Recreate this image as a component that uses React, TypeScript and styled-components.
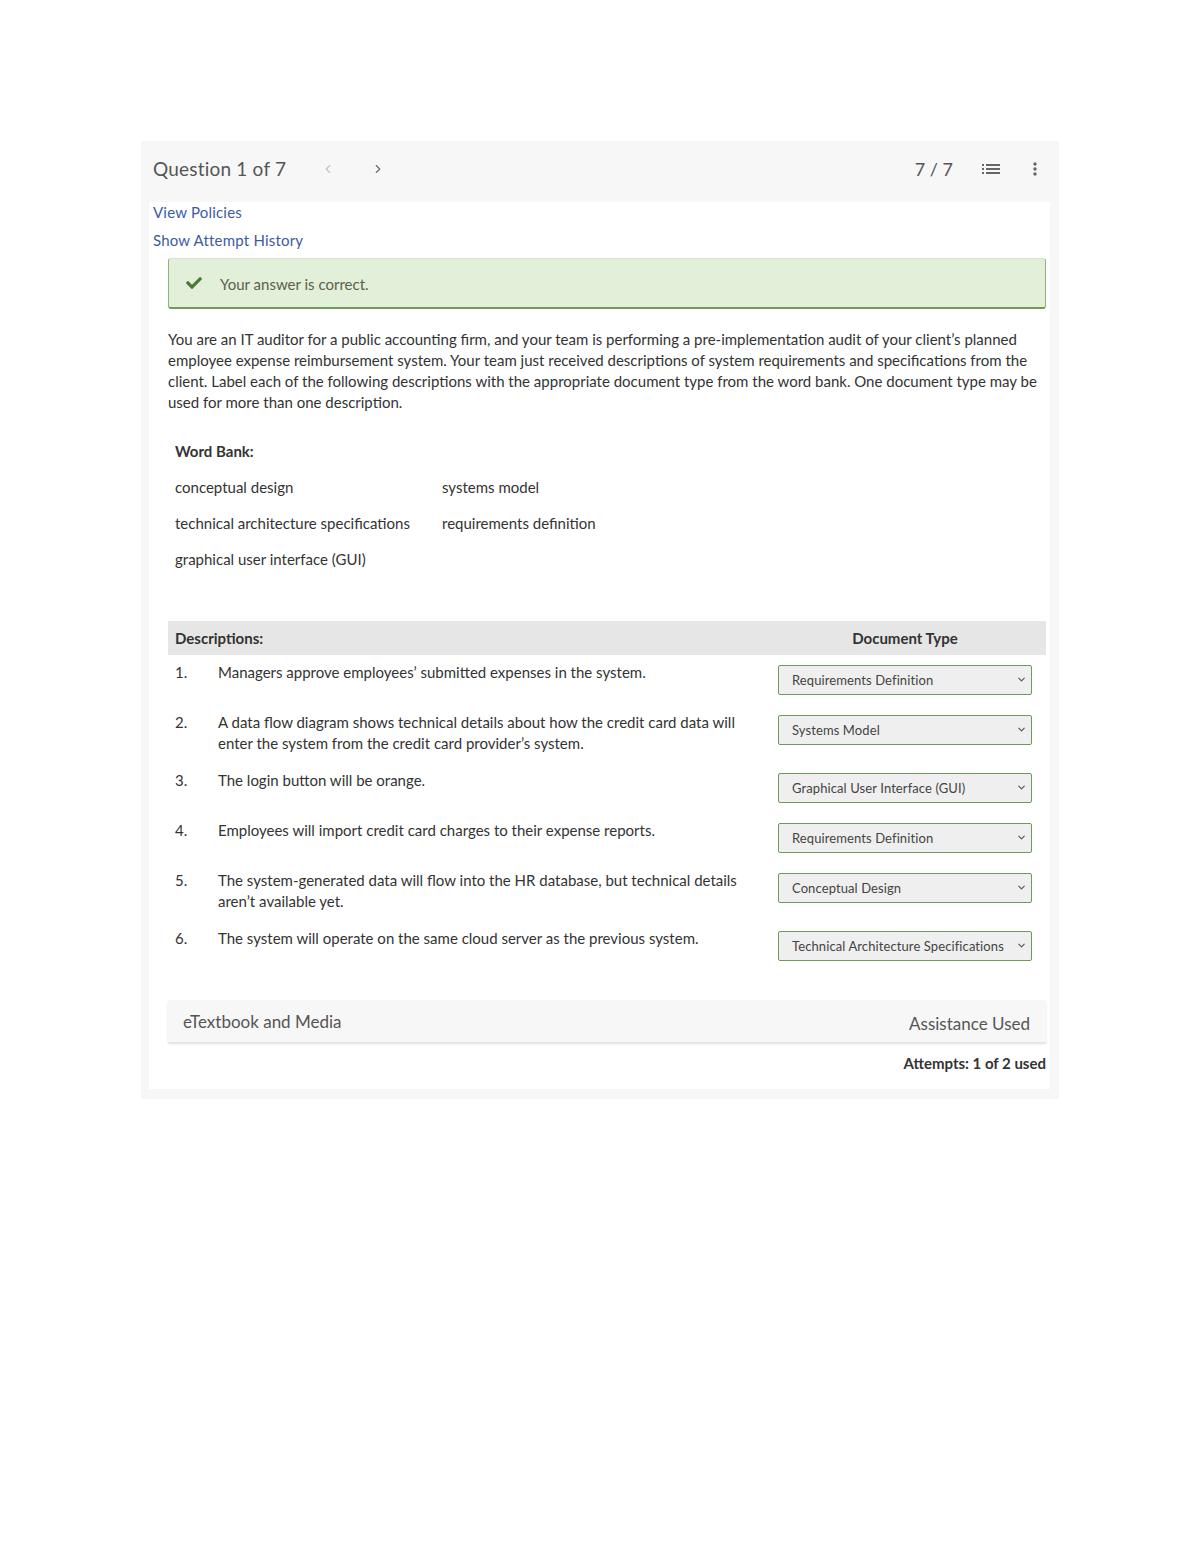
import styled, { createGlobalStyle } from 'styled-components';
import { ChevronLeft, ChevronRight, ChevronDown } from 'lucide-react';
import { FaCheck } from 'react-icons/fa';
import { MdList, MdMoreVert } from 'react-icons/md';

const GlobalStyle = createGlobalStyle`
  html, body {
    margin: 0;
    padding: 0;
    background: #ffffff;
  }
  body {
    font-family: Lato, 'Open Sans', 'Liberation Sans', sans-serif;
    color: #333;
  }
`;

type Item = {
  num: number;
  text: string;
  answer: string;
};

const items: Item[] = [
  { num: 1, text: 'Managers approve employees’ submitted expenses in the system.', answer: 'Requirements Definition' },
  {
    num: 2,
    text: 'A data flow diagram shows technical details about how the credit card data will enter the system from the credit card provider’s system.',
    answer: 'Systems Model',
  },
  { num: 3, text: 'The login button will be orange.', answer: 'Graphical User Interface (GUI)' },
  { num: 4, text: 'Employees will import credit card charges to their expense reports.', answer: 'Requirements Definition' },
  {
    num: 5,
    text: 'The system-generated data will flow into the HR database, but technical details aren’t available yet.',
    answer: 'Conceptual Design',
  },
  { num: 6, text: 'The system will operate on the same cloud server as the previous system.', answer: 'Technical Architecture Specifications' },
];

const options = [
  'Conceptual Design',
  'Systems Model',
  'Technical Architecture Specifications',
  'Requirements Definition',
  'Graphical User Interface (GUI)',
];

const wordBank = [
  'conceptual design',
  'systems model',
  'technical architecture specifications',
  'requirements definition',
  'graphical user interface (GUI)',
];

export default function App() {
  return (
    <>
      <GlobalStyle />
      <Page>
        <Frame>
          <Header>
            <HeaderLeft>
              <QuestionTitle>Question 1 of 7</QuestionTitle>
              <NavButton $muted type="button" aria-label="Previous">
                <ChevronLeft size={14} strokeWidth={2} />
              </NavButton>
              <NavButton type="button" aria-label="Next">
                <ChevronRight size={14} strokeWidth={2} />
              </NavButton>
            </HeaderLeft>
            <HeaderRight>
              <Score>7 / 7</Score>
              <IconButton type="button" aria-label="Question list">
                <MdList size={24} />
              </IconButton>
              <IconButton type="button" aria-label="More">
                <MdMoreVert size={20} />
              </IconButton>
            </HeaderRight>
          </Header>

          <Panel>
            <LinkRow>View Policies</LinkRow>
            <LinkRow $gap>Show Attempt History</LinkRow>

            <Body>
              <SuccessBox>
                <FaCheck size={16} color="#4a7a36" />
                <SuccessText>Your answer is correct.</SuccessText>
              </SuccessBox>

              <Prompt>
                You are an IT auditor for a public accounting firm, and your team is performing a pre-implementation audit of
                your client’s planned employee expense reimbursement system. Your team just received descriptions of system
                requirements and specifications from the client. Label each of the following descriptions with the appropriate
                document type from the word bank. One document type may be used for more than one description.
              </Prompt>

              <WordBank>
                <WordBankTitle>Word Bank:</WordBankTitle>
                <WordGrid>
                  {wordBank.map((w) => (
                    <Word key={w}>{w}</Word>
                  ))}
                </WordGrid>
              </WordBank>

              <Table>
                <TableHead>
                  <HeadCell>Descriptions:</HeadCell>
                  <HeadCell $center>Document Type</HeadCell>
                </TableHead>
                <Rows>
                  {items.map((it) => (
                    <Row key={it.num}>
                      <Num>{it.num}.</Num>
                      <Desc>{it.text}</Desc>
                      <SelectWrap>
                        <Select defaultValue={it.answer}>
                          {options.map((o) => (
                            <option key={o} value={o}>
                              {o}
                            </option>
                          ))}
                        </Select>
                        <Caret>
                          <ChevronDown size={11} strokeWidth={2.5} />
                        </Caret>
                      </SelectWrap>
                    </Row>
                  ))}
                </Rows>
              </Table>

              <MediaBar>
                <MediaLabel>eTextbook and Media</MediaLabel>
                <MediaLabel $right>Assistance Used</MediaLabel>
              </MediaBar>

              <Attempts>Attempts: 1 of 2 used</Attempts>
            </Body>
          </Panel>
        </Frame>
      </Page>
    </>
  );
}

const Page = styled.div`
  padding: 141px 141px 0 141px;
  min-height: 1553px;
  box-sizing: border-box;
`;

const Frame = styled.div`
  width: 918px;
  background: #f7f7f7;
  padding-bottom: 10px;
`;

const Header = styled.div`
  height: 61px;
  box-sizing: border-box;
  display: flex;
  align-items: center;
  justify-content: space-between;
  padding: 0 12px 6px 12px;
`;

const HeaderLeft = styled.div`
  display: flex;
  align-items: center;
`;

const QuestionTitle = styled.div`
  font-size: 19px;
  letter-spacing: 0.2px;
  color: #555;
  margin-right: 35px;
`;

const NavButton = styled.button<{ $muted?: boolean }>`
  background: none;
  border: none;
  padding: 0;
  width: 50px;
  display: flex;
  align-items: center;
  justify-content: flex-start;
  color: ${({ $muted }) => ($muted ? '#c2c2c2' : '#6a6a6a')};
`;

const HeaderRight = styled.div`
  display: flex;
  align-items: center;
`;

const Score = styled.div`
  font-size: 18px;
  color: #555;
  margin-right: 18px;
`;

const IconButton = styled.button`
  background: none;
  border: none;
  padding: 0;
  color: #666;
  display: flex;
  align-items: center;
  justify-content: center;
  width: 24px;
  height: 24px;
  margin-left: 8px;

  & + & {
    margin-left: 20px;
  }
`;

const Panel = styled.div`
  background: #ffffff;
  margin: 0 9px 0 8px;
  padding: 0 4px 15px 4px;
`;

const LinkRow = styled.div<{ $gap?: boolean }>`
  font-size: 15px;
  letter-spacing: 0.2px;
  line-height: 20px;
  color: #3b5ba5;
  margin-top: ${({ $gap }) => ($gap ? '8px' : '0')};
  cursor: pointer;
`;

const Body = styled.div`
  padding: 8px 0 0 15px;
`;

const SuccessBox = styled.div`
  height: 51px;
  box-sizing: border-box;
  display: flex;
  align-items: center;
  gap: 18px;
  padding: 0 17px;
  background: #e2efd9;
  border: 1px solid #8fb37f;
  border-top-color: #d3e4c8;
  border-bottom: 2px solid #6e9a5c;
  border-radius: 3px;
`;

const SuccessText = styled.div`
  font-size: 15px;
  color: #5e5e4c;
  position: relative;
  top: 1px;
`;

const Prompt = styled.p`
  margin: 20px 0 0 0;
  font-size: 15px;
  line-height: 21px;
  color: #333;
`;

const WordBank = styled.div`
  padding: 28px 0 0 7px;
`;

const WordBankTitle = styled.div`
  font-size: 15px;
  font-weight: 700;
  color: #333;
  line-height: 21px;
`;

const WordGrid = styled.div`
  display: grid;
  grid-template-columns: 267px 1fr;
  row-gap: 15px;
  margin-top: 15px;
`;

const Word = styled.div`
  font-size: 15px;
  line-height: 21px;
  color: #333;
`;

const Table = styled.div`
  margin-top: 51px;
`;

const TableHead = styled.div`
  display: grid;
  grid-template-columns: 1fr 254px;
  height: 34px;
  align-items: center;
  background: #e6e6e6;
  padding: 0 14px 0 7px;
`;

const HeadCell = styled.div<{ $center?: boolean }>`
  font-size: 15px;
  font-weight: 700;
  color: #333;
  text-align: ${({ $center }) => ($center ? 'center' : 'left')};
`;

const Rows = styled.div`
  padding-top: 7px;
`;

const Row = styled.div`
  display: grid;
  grid-template-columns: 43px 1fr 254px;
  align-items: start;
  padding: 0 14px 16px 7px;
`;

const Num = styled.div`
  font-size: 15px;
  line-height: 21px;
  color: #333;
`;

const Desc = styled.div`
  font-size: 15px;
  line-height: 21px;
  color: #333;
  padding-right: 30px;
`;

const SelectWrap = styled.div`
  position: relative;
  margin: 3px 0 1px 0;
  height: 30px;
`;

const Select = styled.select`
  appearance: none;
  -webkit-appearance: none;
  width: 254px;
  height: 30px;
  box-sizing: border-box;
  border: 1px solid #6e9a5c;
  border-radius: 2px;
  background: #efefef;
  font-family: Lato, 'Open Sans', 'Liberation Sans', sans-serif;
  font-size: 13px;
  letter-spacing: 0.1px;
  color: #444;
  padding: 0 24px 0 13px;
  outline: none;
`;

const Caret = styled.span`
  position: absolute;
  right: 5px;
  top: 9px;
  color: #555;
  display: flex;
  pointer-events: none;
`;

const MediaBar = styled.div`
  margin-top: 22px;
  height: 42px;
  display: flex;
  align-items: center;
  justify-content: space-between;
  padding: 0 16px 0 15px;
  background: #f7f7f7;
  box-shadow: 0 2px 2px rgba(0, 0, 0, 0.12);
`;

const MediaLabel = styled.div<{ $right?: boolean }>`
  font-size: 17px;
  color: #555;
  position: relative;
  top: ${({ $right }) => ($right ? '2px' : '0')};
`;

const Attempts = styled.div`
  margin-top: 11px;
  text-align: right;
  font-size: 15px;
  font-weight: 700;
  color: #333;
  line-height: 21px;
`;
